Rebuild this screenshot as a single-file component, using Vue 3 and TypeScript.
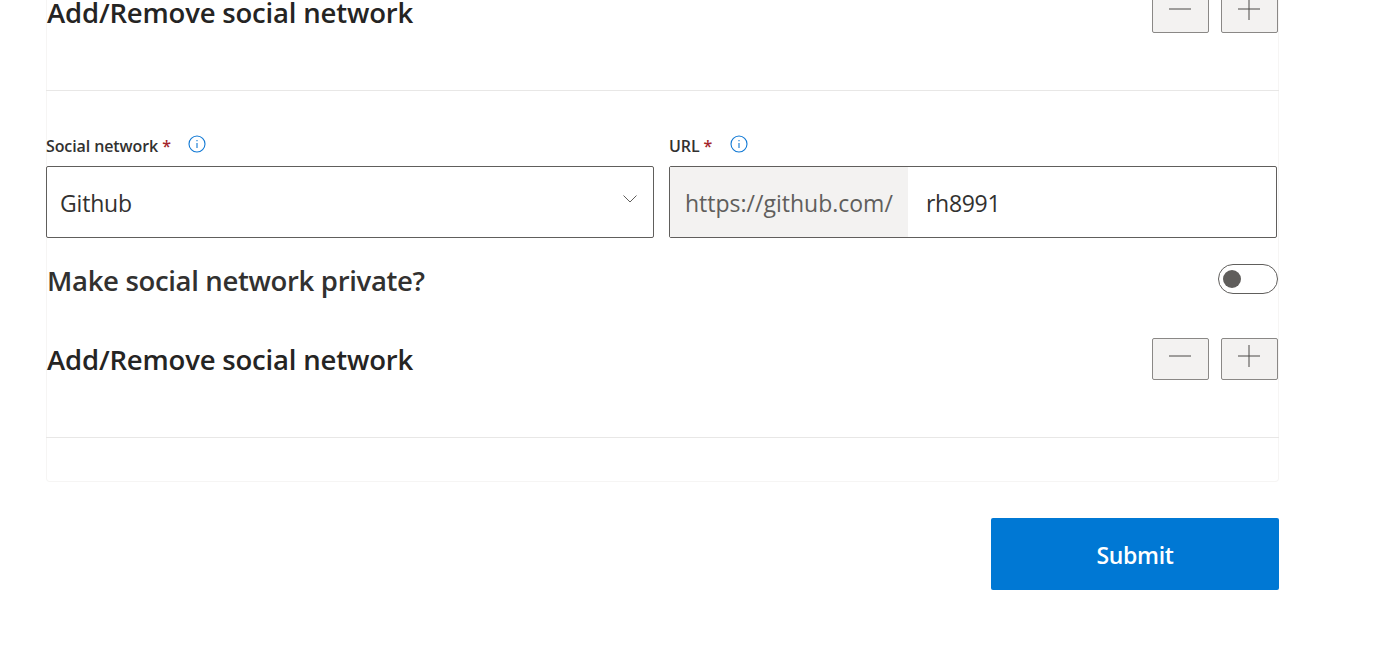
<script setup lang="ts">
interface Section {
  id: number
}
const sections: Section[] = [{ id: 1 }]
</script>

<template>
  <div class="page">
    <div class="card">
      <div class="heading-row first">
        <h2 class="heading">Add/Remove social network</h2>
        <div class="actions">
          <button class="square" aria-label="Remove">
            <svg width="22" height="22" viewBox="0 0 22 22"><path d="M0 11H22" /></svg>
          </button>
          <button class="square" aria-label="Add">
            <svg width="22" height="22" viewBox="0 0 22 22"><path d="M0 11H22M11 0V22" /></svg>
          </button>
        </div>
      </div>
      <div class="divider"></div>

      <section v-for="s in sections" :key="s.id" class="block">
        <div class="fields">
          <div class="field">
            <div class="label-row">
              <span class="label">Social network <em>*</em></span>
              <svg class="info" width="18" height="18" viewBox="0 0 18 18">
                <circle cx="9" cy="9" r="8" />
                <path d="M9 8V13M9 5V6.3" />
              </svg>
            </div>
            <div class="select">
              <span>Github</span>
              <svg width="16" height="16" viewBox="0 0 16 16"><path d="M1.5 4.5L8 11L14.5 4.5" /></svg>
            </div>
          </div>
          <div class="field">
            <div class="label-row">
              <span class="label">URL <em>*</em></span>
              <svg class="info url-info" width="18" height="18" viewBox="0 0 18 18">
                <circle cx="9" cy="9" r="8" />
                <path d="M9 8V13M9 5V6.3" />
              </svg>
            </div>
            <div class="url">
              <span class="prefix">https://github.com/</span>
              <span class="value">rh8991</span>
            </div>
          </div>
        </div>

        <div class="toggle-row">
          <span class="heading private">Make social network private?</span>
          <span class="toggle"><i></i></span>
        </div>

        <div class="heading-row second">
          <h2 class="heading">Add/Remove social network</h2>
          <div class="actions">
            <button class="square" aria-label="Remove">
              <svg width="22" height="22" viewBox="0 0 22 22"><path d="M0 11H22" /></svg>
            </button>
            <button class="square" aria-label="Add">
              <svg width="22" height="22" viewBox="0 0 22 22"><path d="M0 11H22M11 0V22" /></svg>
            </button>
          </div>
        </div>
      </section>
      <div class="divider"></div>
      <div class="tail"></div>
    </div>

    <div class="footer">
      <button class="submit">Submit</button>
    </div>
  </div>
</template>

<style>
html,
body {
  margin: 0;
  background: #fff;
  overflow: hidden;
}
</style>

<style scoped>
.page {
  width: 1233px;
  margin: -9px 0 0 46px;
  font-family: "Open Sans", "Noto Sans", sans-serif;
  color: #323130;
}
.card {
  box-shadow: inset 0 0 0 1px #f6f5f4;
  border-radius: 0 0 4px 4px;
}
.heading-row {
  display: flex;
  justify-content: space-between;
  align-items: center;
  height: 42px;
  padding: 0 1px;
}
.heading {
  margin: 0;
  padding-top: 1px;
  font-size: 27.5px;
  font-weight: 600;
  line-height: 36px;
  letter-spacing: -0.18px;
  color: #252423;
}
.private {
  padding-top: 3px;
  letter-spacing: -0.33px;
  color: #323130;
}
.actions {
  display: flex;
  gap: 12px;
}
.square {
  width: 57px;
  height: 42px;
  padding: 0;
  display: flex;
  align-items: center;
  justify-content: center;
  background: #f3f2f1;
  border: 1px solid #8a8886;
  border-radius: 2px;
}
.square svg {
  fill: none;
  stroke: #4a4846;
  stroke-width: 1;
  transform: translate(-1px, -3px);
}
.first {
  margin-bottom: 57px;
}
.divider {
  height: 1px;
  background: #e8e7e6;
}
.block {
  padding-top: 44px;
}
.fields {
  display: grid;
  grid-template-columns: 608px 608px;
  column-gap: 15px;
}
.label-row {
  display: flex;
  align-items: center;
  height: 20px;
  margin-bottom: 11px;
}
.label {
  padding-top: 1px;
  font-size: 16px;
  font-weight: 600;
  line-height: 20px;
  letter-spacing: -0.1px;
  color: #323130;
}
.label em {
  font-style: normal;
  color: #a4262c;
  margin-left: 0;
}
.info {
  margin: -2px 0 0 17px;
  fill: none;
  stroke: #0f78d4;
  stroke-width: 1.1;
}
.url-info {
  margin-left: 18px;
}
.select {
  height: 72px;
  box-sizing: border-box;
  display: flex;
  align-items: center;
  justify-content: space-between;
  padding: 0 15px 0 13px;
  border: 1px solid #605e5c;
  border-radius: 2px;
  font-size: 23px;
  letter-spacing: -0.2px;
}
.select span {
  padding-top: 2px;
}
.select svg {
  fill: none;
  stroke: #605e5c;
  stroke-width: 1;
  transform: translateY(-3px);
}
.url {
  height: 72px;
  box-sizing: border-box;
  display: flex;
  align-items: stretch;
  border: 1px solid #605e5c;
  border-radius: 2px;
  font-size: 23px;
  letter-spacing: -0.2px;
}
.prefix {
  display: flex;
  align-items: center;
  width: 238px;
  box-sizing: border-box;
  padding: 2px 0 0 15px;
  background: #f3f2f1;
  color: #605e5c;
  white-space: nowrap;
  letter-spacing: 0;
}
.value {
  display: flex;
  align-items: center;
  padding: 2px 0 0 18px;
  letter-spacing: -0.3px;
}
.toggle-row {
  display: flex;
  justify-content: space-between;
  align-items: center;
  height: 30px;
  margin-top: 26px;
  padding: 0 1px;
}
.toggle {
  width: 60px;
  height: 30px;
  box-sizing: border-box;
  display: flex;
  align-items: center;
  padding-left: 4px;
  border: 1px solid #605e5c;
  border-radius: 15px;
  background: #fff;
}
.toggle i {
  width: 18px;
  height: 18px;
  border-radius: 50%;
  background: #605e5c;
}
.second {
  margin-top: 44px;
  margin-bottom: 57px;
}
.tail {
  height: 44px;
}
.footer {
  display: flex;
  justify-content: flex-end;
  margin-top: 36px;
}
.submit {
  width: 288px;
  height: 72px;
  padding: 2px 0 0;
  border: 0;
  border-radius: 2px;
  background: #0078d4;
  color: #fff;
  font-family: inherit;
  font-size: 23px;
  font-weight: 600;
  letter-spacing: -0.3px;
}
</style>
